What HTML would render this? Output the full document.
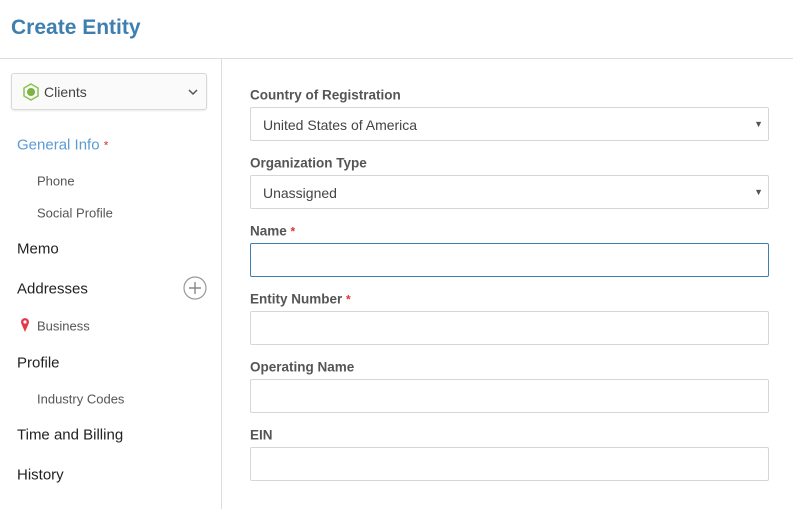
<!DOCTYPE html>
<html><head><meta charset="utf-8"><style>
*{box-sizing:border-box;margin:0;padding:0}
body{width:793px;height:509px;background:#fff;font-family:"Liberation Sans",sans-serif;position:relative;overflow:hidden;color:#333}
.a{position:absolute;white-space:nowrap}
h1{position:absolute;left:11px;top:16px;font-size:21px;font-weight:bold;color:#3f7fb0}
.hl{position:absolute;left:0;top:58px;width:793px;height:1px;background:#ddd}
.vl{position:absolute;left:221px;top:59px;width:1px;height:450px;background:#ddd}
.dd{position:absolute;left:11px;top:73px;width:196px;height:37px;border:1px solid #d8d8d8;border-radius:3px;background:#fafafa;box-shadow:0 1px 2px rgba(0,0,0,.08)}
.nav{font-size:15px;color:#222;transform:translateY(-50%)}
.sub{font-size:13px;color:#555;transform:translateY(-50%)}
.lb{font-size:13.5px;font-weight:bold;color:#555;transform:translateY(-50%);left:250px}
.f{position:absolute;left:250px;width:519px;height:34px;border:1px solid #d6d6d6;border-radius:2px;background:#fff;font-size:14px;color:#444;padding:9px 12px}
.f .c{position:absolute;right:5px;top:11px;font-size:9px;color:#555}
.r{color:#d33;font-size:12px}
</style></head><body>
<h1>Create Entity</h1>
<div class="hl"></div><div class="vl"></div>
<div class="dd">
<svg class="a" style="left:11px;top:9px" width="16" height="18" viewBox="0 0 16 18"><polygon points="8,1 15,5 15,13 8,17 1,13 1,5" fill="none" stroke="#8bc34a" stroke-width="1.5"/><circle cx="8" cy="9" r="4" fill="#7cb342"/></svg>
<span class="a" style="left:32px;top:10px;font-size:14px;color:#444">Clients</span>
<svg class="a" style="left:176px;top:15px" width="10" height="7" viewBox="0 0 10 7"><path d="M1 1L5 5L9 1" fill="none" stroke="#555" stroke-width="1.5"/></svg>
</div>
<span class="a nav" style="left:17px;top:145px;color:#5b9bd5">General Info <span class="r">*</span></span>
<span class="a sub" style="left:37px;top:181px">Phone</span>
<span class="a sub" style="left:37px;top:213px">Social Profile</span>
<span class="a nav" style="left:17px;top:249px">Memo</span>
<span class="a nav" style="left:17px;top:289px">Addresses</span>
<svg class="a" style="left:183px;top:276px" width="24" height="24" viewBox="0 0 24 24"><circle cx="12" cy="12" r="11" fill="none" stroke="#999" stroke-width="1.2"/><path d="M12 6V18M6 12H18" stroke="#888" stroke-width="1.4"/></svg>
<svg class="a" style="left:20px;top:317px" width="10" height="16" viewBox="0 0 10 16"><path d="M5 15L1.5 7A4 4 0 1 1 8.5 7Z" fill="#e53945"/><circle cx="5" cy="5" r="1.6" fill="#fff"/></svg>
<span class="a sub" style="left:37px;top:326px">Business</span>
<span class="a nav" style="left:17px;top:363px">Profile</span>
<span class="a sub" style="left:37px;top:399px">Industry Codes</span>
<span class="a nav" style="left:17px;top:435px">Time and Billing</span>
<span class="a nav" style="left:17px;top:475px">History</span>

<span class="a lb" style="top:95px">Country of Registration</span>
<div class="f" style="top:107px">United States of America<span class="c">▼</span></div>
<span class="a lb" style="top:163px">Organization Type</span>
<div class="f" style="top:175px">Unassigned<span class="c">▼</span></div>
<span class="a lb" style="top:231px">Name <span class="r">*</span></span>
<div class="f" style="top:243px;border-color:#3f7fb0"></div>
<span class="a lb" style="top:299px">Entity Number <span class="r">*</span></span>
<div class="f" style="top:311px"></div>
<span class="a lb" style="top:367px">Operating Name</span>
<div class="f" style="top:379px"></div>
<span class="a lb" style="top:435px">EIN</span>
<div class="f" style="top:447px"></div>
</body></html>
